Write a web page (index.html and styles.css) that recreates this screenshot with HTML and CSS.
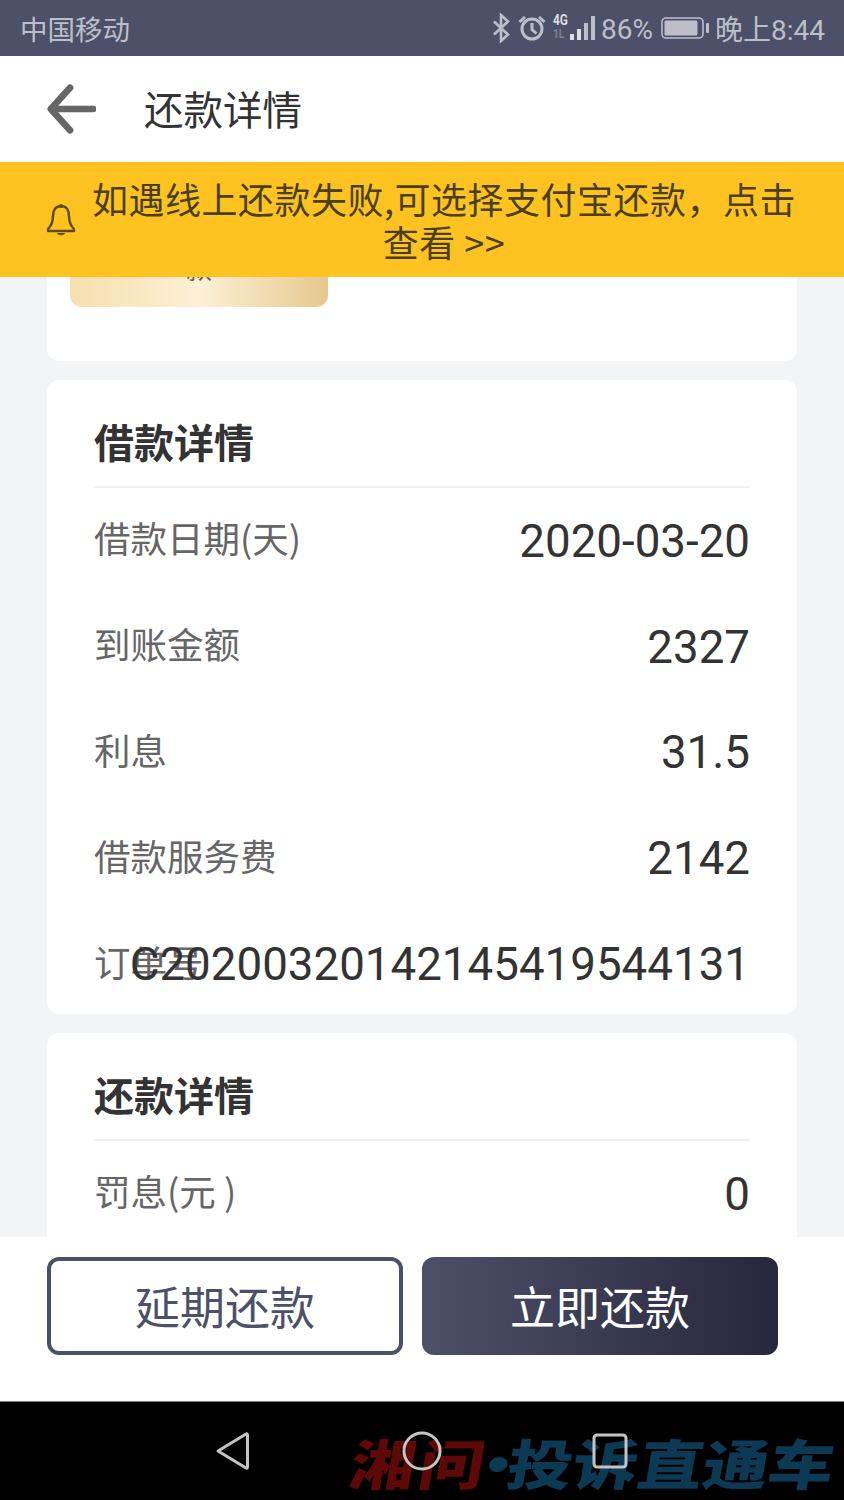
FILE: index.html
```html
<!DOCTYPE html>
<html lang="zh-CN">
<head>
<meta charset="utf-8">
<title>还款详情</title>
<link rel="stylesheet" href="styles.css">
</head>
<body>
<div class="app">
  <div class="status">
    <span class="carrier">中国移动</span>
    <div class="status-right">
      <svg class="ic-bt" viewBox="0 0 18 30" width="18" height="30"><path d="M2 8.500l14 13-7 6.500V2l7 6.500-14 13" fill="none" stroke="#bcbfca" stroke-width="2.600"/></svg>
      <svg class="ic-alarm" viewBox="0 0 28 28" width="28" height="28"><circle cx="14" cy="15" r="10" fill="none" stroke="#bcbfca" stroke-width="3"/><path d="M14 9v6.500l4.500 4M1.500 8l5.500-5M26.500 8l-5.500-5" fill="none" stroke="#bcbfca" stroke-width="3"/></svg>
      <div class="net">
        <span class="net-4g">4G</span>
        <span class="net-sub">1L</span>
        <svg viewBox="0 0 26 24" width="26" height="24"><rect x="0" y="18" width="4" height="6" fill="#dcdde3"/><rect x="7" y="13" width="4" height="11" fill="#dcdde3"/><rect x="14" y="7" width="4" height="17" fill="#bcbfca"/><rect x="21" y="0" width="4" height="24" fill="#bcbfca"/></svg>
      </div>
      <span class="pct">86%</span>
      <svg class="ic-batt" viewBox="0 0 50 24" width="50" height="24"><rect x="1" y="2" width="41" height="20" rx="4" fill="none" stroke="#bcbfca" stroke-width="1.600"/><rect x="3.500" y="4.500" width="33" height="15" rx="1.500" fill="#bcbfca"/><rect x="45" y="7" width="3" height="10" rx="1" fill="#bcbfca"/></svg>
      <span class="time">晚上8:44</span>
    </div>
  </div>

  <header class="nav">
    <svg class="back" viewBox="0 0 52 52" width="50" height="50"><path d="M25 4L5 26l20 22M7 26h42" fill="none" stroke="#666" stroke-width="7" stroke-linecap="round" stroke-linejoin="round"/></svg>
    <h1 class="title">还款详情</h1>
  </header>

  <div class="notice">
    <svg class="bell" viewBox="0 0 30 34" width="30" height="34"><path d="M15 3c-6 0-8 5-8 10 0 6-2 10-5 13v2h26v-2c-3-3-5-7-5-13 0-5-2-10-8-10z" fill="none" stroke="#5c4c14" stroke-width="2.400" stroke-linejoin="round"/><path d="M11 30c1 3 7 3 8 0z" fill="#5c4c14"/><circle cx="15" cy="3" r="2" fill="#5c4c14"/></svg>
    <p class="notice-text">如遇线上还款失败,可选择支付宝还款，点击查看 &gt;&gt;</p>
  </div>

  <main class="scroll">
    <section class="card card-top">
      <div class="gold"><span class="gold-text">款</span></div>
    </section>

    <section class="card card-loan">
      <h2 class="card-title">借款详情</h2>
      <div class="row"><span class="label">借款日期(天)</span><span class="value">2020-03-20</span></div>
      <div class="row"><span class="label">到账金额</span><span class="value">2327</span></div>
      <div class="row"><span class="label">利息</span><span class="value">31.5</span></div>
      <div class="row"><span class="label">借款服务费</span><span class="value">2142</span></div>
      <div class="row"><span class="label">订单号</span><span class="value">C20200320142145419544131</span></div>
    </section>

    <section class="card">
      <h2 class="card-title">还款详情</h2>
      <div class="row"><span class="label">罚息(元 )</span><span class="value">0</span></div>
    </section>
  </main>

  <footer class="actions">
    <button class="btn btn-outline">延期还款</button>
    <button class="btn btn-solid">立即还款</button>
  </footer>

  <div class="sysbar">
    <div class="watermark"><span class="wm-red">湘问</span><span class="wm-dot">·</span><span class="wm-blue">投诉直通车</span></div>
    <svg class="sys-ic" viewBox="0 0 36 40" width="36" height="40"><path d="M32 3L4 20l28 17c1 .5 1.500 0 1.500-1V4c0-1-.5-1.500-1.500-1z" fill="none" stroke="#c4c4c4" stroke-width="3" stroke-linejoin="round"/></svg>
    <svg class="sys-ic" viewBox="0 0 40 40" width="40" height="40"><circle cx="20" cy="20" r="18" fill="none" stroke="#c4c4c4" stroke-width="3"/></svg>
    <svg class="sys-ic" viewBox="0 0 36 36" width="36" height="36"><rect x="2" y="2" width="32" height="32" rx="3" fill="none" stroke="#c4c4c4" stroke-width="3"/></svg>
  </div>
</div>
</body>
</html>
```

FILE: styles.css
```css
* { box-sizing: border-box; }
html, body { margin: 0; padding: 0; }
body { font-family: "Noto Sans CJK SC", "Noto Sans", sans-serif; background: #f3f4f6; }
.app { width: 844px; height: 1500px; display: flex; flex-direction: column; overflow: hidden; }

.status { height: 56px; flex: none; background: #4c5068; color: #bcbfca; display: flex; align-items: center; justify-content: space-between; padding: 0 19px 0 20px; font-size: 27.500px; }
.carrier { line-height: 56px; }
.status-right { display: flex; align-items: center; }
.ic-bt { margin-right: 8px; }
.ic-alarm { margin-right: 6px; }
.net { position: relative; width: 44px; height: 36px; display: flex; align-items: flex-end; justify-content: flex-end; padding-bottom: 6px; margin-right: 5px; }
.net-4g, .net-sub { position: absolute; left: 1px; font-family: "Roboto", sans-serif; font-weight: 700; line-height: 13px; transform: scaleX(.85); transform-origin: left; }
.net-4g { top: 4px; font-size: 14px; color: #dcdde3; }
.net-sub { top: 18px; font-size: 12px; color: #7f8296; }
.pct { font-family: "Roboto", sans-serif; font-size: 28px; line-height: 32px; padding-top: 3px; margin-right: 8px; }
.ic-batt { margin-right: 4px; }
.time { font-family: "Roboto", "Noto Sans CJK SC", sans-serif; font-size: 28px; }

.nav { height: 106px; flex: none; background: #fff; display: flex; align-items: center; padding: 0 0 0 46px; }
.back { flex: none; margin-right: 48px; }
.title { margin: 0; font-size: 39.500px; line-height: 50px; padding-bottom: 2px; font-weight: 400; color: #333; }

.notice { height: 115px; flex: none; background: #fec321; display: flex; align-items: center; padding: 0 47px 0 46px; gap: 15px; }
.bell { flex: none; }
.notice-text { margin: 0; flex: 1; text-align: center; font-size: 36px; line-height: 43px; color: #4a3f17; letter-spacing: .5px; }

.scroll { flex: 1; min-height: 0; overflow: hidden; padding: 0 47px; display: flex; flex-direction: column; gap: 19px; background: #f3f4f6; }
.card { flex: none; background: #fff; border-radius: 12px; padding: 0 47px; }
.card-top { margin-top: -40px; height: 124px; padding: 0 23px; }
.gold { width: 258px; height: 70px; border-radius: 0 0 12px 12px; background: linear-gradient(90deg, #f7dfae 0%, #fdf0d6 50%, #e6c88e 100%); text-align: center; }
.gold-text { display: block; font-size: 26px; line-height: 62px; color: #6b6252; }
.card-loan { height: 634px; overflow: hidden; }
.card-title { margin: 0; height: 108px; line-height: 122px; font-size: 40px; font-weight: 700; color: #333; border-bottom: 2px solid #f1f1f3; }

.row { display: grid; align-items: center; height: 105.800px; }
.label, .value { grid-area: 1 / 1; white-space: nowrap; }
.label { font-size: 36.500px; padding-bottom: 6px; color: #666; justify-self: start; }
.value { font-family: "Roboto", sans-serif; font-size: 45.700px; padding-top: 1px; color: #333; justify-self: end; }

.actions { height: 164px; flex: none; background: #fff; padding: 20px 47px 0; display: flex; gap: 19px; align-items: flex-start; }
.btn { width: 356px; height: 98px; border-radius: 12px; font-family: inherit; font-size: 45px; padding: 0 0 2px; }
.btn-outline { background: #fff; border: 4px solid #4c5068; color: #4c5068; }
.btn-solid { background: linear-gradient(90deg, #4c5068 0%, #27273d 100%); border: 0; color: #fff; }

.sysbar { position: relative; height: 99px; flex: none; background: #000; border-top: 1px solid #777; display: flex; align-items: center; padding-left: 214px; gap: 168px; }
.sys-ic { position: relative; flex: none; }
.sysbar .sys-ic:nth-of-type(2) { margin-left: -16px; }
.sysbar .sys-ic:nth-of-type(3) { margin-left: -18px; }
.watermark { position: absolute; left: 351px; top: 30px; font-size: 54px; line-height: 60px; font-weight: 900; white-space: nowrap; transform: skewX(-10deg) scaleX(1.21); transform-origin: left; }
.wm-red { color: #5e0808; letter-spacing: 3px; }
.wm-dot { color: #0c3a55; display: inline-block; width: 16px; text-indent: -19px; }
.wm-blue { color: #0c3a55; }
```
